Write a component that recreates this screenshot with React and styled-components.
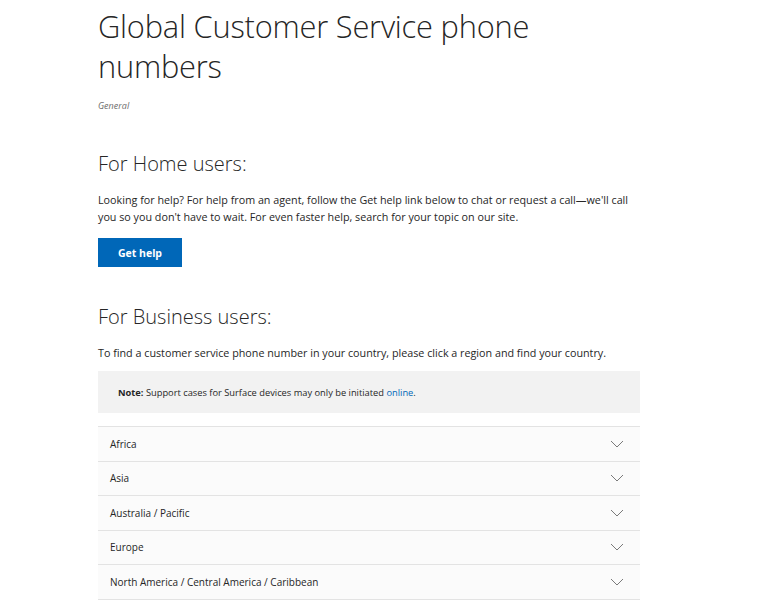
import React from "react";
import styled, { createGlobalStyle } from "styled-components";

const Global = createGlobalStyle`
  html, body { margin: 0; padding: 0; background: #fff; }
  body { font-family: "Open Sans", "Noto Sans", sans-serif; color: #262626; }
`;

const Page = styled.main`
  width: 542px;
  margin-left: 98px;
  padding-top: 6px;
`;

const Title = styled.h1`
  margin: 0;
  font-weight: 300;
  font-size: 30.8px;
  line-height: 40px;
  color: #262626;
  letter-spacing: -0.2px;
`;

const Tag = styled.div`
  margin-top: 13px;
  font-size: 9px;
  font-style: italic;
  color: #6e6e6e;
`;

const SectionTitle = styled.h2`
  margin: ${(p) => p.$top}px 0 0;
  font-weight: 300;
  font-size: 20px;
  line-height: 28px;
  color: #262626;
`;

const Para = styled.p`
  margin: ${(p) => p.$top}px 0 0;
  font-size: 10.75px;
  line-height: 17px;
  color: #262626;
`;

const Button = styled.button`
  display: block;
  margin-top: 12px;
  width: 84px;
  height: 29px;
  border: none;
  background: #0067b8;
  color: #fff;
  font-family: inherit;
  font-weight: 700;
  font-size: 10.5px;
  padding: 0;
  cursor: pointer;
`;

const Note = styled.div`
  margin-top: 9px;
  background: #f2f2f2;
  height: 42px;
  display: flex;
  align-items: center;
  padding: 1px 0 0 20px;
  box-sizing: border-box;
  font-size: 9.3px;
  color: #262626;
  b { font-weight: 700; }
  a { color: #0067b8; text-decoration: none; }
`;

const Accordion = styled.div`
  margin-top: 13px;
  border-bottom: 1px solid #e3e3e3;
`;

const Row = styled.div`
  height: 33.5px;
  border-top: 1px solid #e3e3e3;
  background: #fbfbfb;
  display: flex;
  align-items: center;
  justify-content: space-between;
  padding: 0 16px 0 12px;
  font-size: 10px;
  color: #262626;
`;

const Chevron = () => (
  <svg width="14" height="8" viewBox="0 0 14 8" fill="none">
    <path d="M1 1l6 6 6-6" stroke="#7a7a7a" strokeWidth="1" />
  </svg>
);

const regions = [
  "Africa",
  "Asia",
  "Australia / Pacific",
  "Europe",
  "North America / Central America / Caribbean",
];

export default function App() {
  return (
    <Page>
      <Global />
      <Title>Global Customer Service phone numbers</Title>
      <Tag>General</Tag>
      <SectionTitle $top={38}>For Home users:</SectionTitle>
      <Para $top={14}>
        Looking for help? For help from an agent, follow the Get help link below to chat or request a call—we'll call
        you so you don't have to wait. For even faster help, search for your topic on our site.
      </Para>
      <Button>Get help</Button>
      <SectionTitle $top={36}>For Business users:</SectionTitle>
      <Para $top={14}>
        To find a customer service phone number in your country, please click a region and find your country.
      </Para>
      <Note>
        <span>
          <b>Note:</b> Support cases for Surface devices may only be initiated <a href="#">online</a>.
        </span>
      </Note>
      <Accordion>
        {regions.map((r) => (
          <Row key={r}>
            <span>{r}</span>
            <Chevron />
          </Row>
        ))}
      </Accordion>
    </Page>
  );
}
